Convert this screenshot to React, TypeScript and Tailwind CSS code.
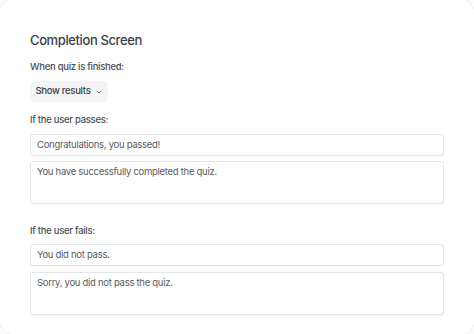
import React from 'react';
import { ChevronDown } from 'lucide-react';

const Field: React.FC<{ value: string }> = ({ value }) => (
  <div className="h-[22px] rounded-[3px] border border-[#e4e6e9] bg-white px-[6px] flex items-center text-[9.5px] tracking-[-0.03em] text-[#565b63] shadow-[0_1px_1px_rgba(0,0,0,0.03)]">
    {value}
  </div>
);

const Area: React.FC<{ value: string }> = ({ value }) => (
  <div className="h-[43px] rounded-[3px] border border-[#e4e6e9] bg-white px-[6px] pt-[3px] text-[9.5px] leading-[14px] tracking-[-0.03em] text-[#565b63] shadow-[0_1px_1px_rgba(0,0,0,0.03)]">
    {value}
  </div>
);

const Label: React.FC<{ text: string; className?: string }> = ({ text, className }) => (
  <div className={`text-[9.5px] leading-[14px] font-medium tracking-[-0.03em] text-[#4b5059] ${className ?? ''}`}>{text}</div>
);

export default function App() {
  return (
    <div className="w-[474px] h-[334px] bg-[#fbfbfc] overflow-hidden" style={{ fontFamily: 'Inter, "Noto Sans", sans-serif' }}>
      <div className="-mx-[2px] -my-[2px] h-[338px] rounded-[18px] border border-[#eceef1] bg-white pl-[31px] pr-[31px] pt-[32px]">
        <h2 className="text-[13px] leading-[18px] text-[#3a3f47] font-medium tracking-[-0.03em]">Completion Screen</h2>
        <Label text="When quiz is finished:" className="mt-[11px]" />
        <button className="mt-[7px] h-[21px] w-[78px] rounded-[5px] bg-[#f3f4f6] flex items-center justify-center gap-[4px] text-[9.5px] font-medium tracking-[-0.03em] text-[#3a3f47]">
          Show results
          <ChevronDown size={8} strokeWidth={2.5} className="text-[#555b63]" />
        </button>
        <Label text="If the user passes:" className="mt-[11px]" />
        <div className="mt-[7px] flex flex-col gap-[5px]">
          <Field value="Congratulations, you passed!" />
          <Area value="You have successfully completed the quiz." />
        </div>
        <Label text="If the user fails:" className="mt-[20px]" />
        <div className="mt-[6px] flex flex-col gap-[6px]">
          <Field value="You did not pass." />
          <Area value="Sorry, you did not pass the quiz." />
        </div>
      </div>
    </div>
  );
}
